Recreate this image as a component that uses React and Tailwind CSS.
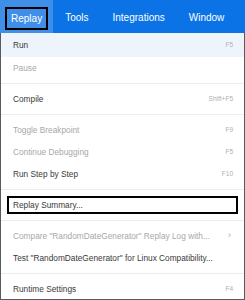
import React from "react";

const items = [
  { label: "Run", shortcut: "F5", active: true },
  { label: "Pause", disabled: true },
  "sep",
  { label: "Compile", shortcut: "Shift+F5" },
  "sep",
  { label: "Toggle Breakpoint", shortcut: "F9", disabled: true },
  { label: "Continue Debugging", shortcut: "F5", disabled: true },
  { label: "Run Step by Step", shortcut: "F10" },
  "sep",
  { label: "Replay Summary...", focused: true },
  "sep",
  { label: 'Compare "RandomDateGenerator" Replay Log with...', disabled: true, submenu: true },
  { label: 'Test "RandomDateGenerator" for Linux Compatibility...' },
  "sep",
  { label: "Runtime Settings", shortcut: "F4" },
];

const tabs = ["Tools", "Integrations", "Window"];

const MenuRow = ({ item }) => {
  const textColor = item.disabled ? "text-[#a8a8a8]" : "text-[#3a3a3a]";

  if (item.focused) {
    return (
      <div className="h-[22px] px-[6px] py-[2px]">
        <div className={`h-full border-2 border-black flex items-center pl-[4px] ${textColor}`}>
          {item.label}
        </div>
      </div>
    );
  }

  return (
    <div
      className={`flex items-center justify-between pl-[12px] pr-[11px] ${
        item.active ? "h-[24px] bg-[#eef4fc]" : "h-[22px]"
      } ${textColor}`}
    >
      <span className="whitespace-nowrap">{item.label}</span>
      {item.shortcut && <span className="text-[6.5px] text-[#b0b0b0]">{item.shortcut}</span>}
      {item.submenu && <span className="text-[9px] text-[#a8a8a8] pr-[2px]">›</span>}
    </div>
  );
};

export default function App() {
  return (
    <div className="w-[245px] h-[300px] overflow-hidden bg-white font-['Liberation_Sans',Arial,sans-serif]">
      <div className="h-[33px] bg-[#0b73e5] flex text-white text-[10px]">
        <div className="bg-[#3f8fe9] px-[5px] pt-[7px]">
          <div className="h-[23px] border-2 border-black px-[4px] flex items-center">Replay</div>
        </div>
        {tabs.map((t) => (
          <div key={t} className="px-[12px] flex items-center pt-[2px]">
            {t}
          </div>
        ))}
      </div>

      <div className="h-[267px] border-x border-b border-[#5a5a5a] text-[8.3px]">
        {items.map((item, i) =>
          item === "sep" ? (
            <div key={i} className="my-[4px] h-px bg-[#ececec]" />
          ) : (
            <MenuRow key={i} item={item} />
          )
        )}
      </div>
    </div>
  );
}
